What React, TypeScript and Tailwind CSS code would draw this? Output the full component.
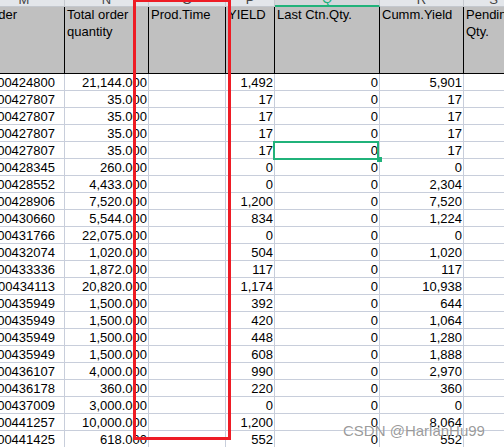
import React from 'react'

type Row = [string, string, string, string, string, string];

const rows: Row[] = [
    ['00424800', '21,144.000', '', '1,492', '0', '5,901'],
    ['00427807', '35.000', '', '17', '0', '17'],
    ['00427807', '35.000', '', '17', '0', '17'],
    ['00427807', '35.000', '', '17', '0', '17'],
    ['00427807', '35.000', '', '17', '0', '17'],
    ['00428345', '260.000', '', '0', '0', '0'],
    ['00428552', '4,433.000', '', '0', '0', '2,304'],
    ['00428906', '7,520.000', '', '1,200', '0', '7,520'],
    ['00430660', '5,544.000', '', '834', '0', '1,224'],
    ['00431766', '22,075.000', '', '0', '0', '0'],
    ['00432074', '1,020.000', '', '504', '0', '1,020'],
    ['00433336', '1,872.000', '', '117', '0', '117'],
    ['00434113', '20,820.000', '', '1,174', '0', '10,938'],
    ['00435949', '1,500.000', '', '392', '0', '644'],
    ['00435949', '1,500.000', '', '420', '0', '1,064'],
    ['00435949', '1,500.000', '', '448', '0', '1,280'],
    ['00435949', '1,500.000', '', '608', '0', '1,888'],
    ['00436107', '4,000.000', '', '990', '0', '2,970'],
    ['00436178', '360.000', '', '220', '0', '360'],
    ['00437009', '3,000.000', '', '0', '0', '0'],
    ['00441257', '10,000.000', '', '1,200', '0', '8,064'],
    ['00441425', '618.000', '', '552', '0', '552'],
];

const letters = ['M', 'N', 'O', 'P', 'Q', 'R', 'S'];
const headers = ['Sales order', 'Total order quantity', 'Prod.Time', 'YIELD', 'Last Ctn.Qty.', 'Cumm.Yield', 'Pending Qty.'];

const App = () => {
    return (
        <div className="relative w-[504px] h-[447px] overflow-hidden bg-white text-black text-[13px] font-['Liberation_Sans',Arial,sans-serif]">
            <div className="grid grid-cols-[65px_84px_77px_49px_105px_84px_60px] w-max">

                {/* column letters */}
                {letters.map((l, i) => (
                    <div
                        key={l}
                        className={
                            l === 'Q'
                                ? "h-[7px] border-r border-b-2 border-r-[#c4c8ce] border-b-[#20b27a] bg-[#d4d7db] text-[#20b27a] overflow-hidden flex items-end justify-center"
                                : i === 0
                                    ? "h-[7px] border-r border-b border-[#c4c8ce] bg-[#e3e6ea] text-[#444] overflow-hidden flex items-end justify-center pr-[16px]"
                                    : "h-[7px] border-r border-b border-[#c4c8ce] bg-[#e3e6ea] text-[#444] overflow-hidden flex items-end justify-center"
                        }>
                        <span className="leading-[14px] -mb-[1px]">{l}</span>
                    </div>
                ))}

                {/* header row */}
                {headers.map((h, i) => (
                    <div
                        key={h}
                        className={
                            i === 0
                                ? "h-[67px] bg-[#c0c0c0] border-r border-b border-black leading-[16.5px] overflow-hidden whitespace-nowrap flex justify-end pr-[47px]"
                                : "h-[67px] bg-[#c0c0c0] border-r border-b border-black leading-[16.5px] overflow-hidden pl-[2px]"
                        }>
                        <span>{h}</span>
                    </div>
                ))}

                {/* data rows */}
                {rows.map((r, ri) => (
                    <React.Fragment key={ri}>
                        <div className="h-[17px] border-r border-b border-[#c8cedb] pt-[1px] leading-[16px] overflow-hidden whitespace-nowrap flex justify-end pr-[9px]">
                            {'10' + r[0]}
                        </div>
                        {r.slice(1).map((c, ci) => (
                            <div key={ci} className="h-[17px] border-r border-b border-[#c8cedb] pt-[1px] pr-[1px] leading-[16px] text-right overflow-hidden whitespace-nowrap">
                                {c}
                            </div>
                        ))}
                        <div className="h-[17px] border-b border-[#c8cedb]" />
                    </React.Fragment>
                ))}
            </div>

            {/* selected cell */}
            <div className="absolute left-[273px] top-[141px] w-[106px] h-[19px] border-2 border-[#20b27a]" />
            <div className="absolute left-[377px] top-[157px] w-[5px] h-[5px] bg-[#20b27a]" />

            {/* red annotation box */}
            <div className="absolute left-[133px] top-[-1px] w-[98px] h-[441px] border-[3px] border-[#ee1c25]" />

            {/* watermark */}
            <div className="absolute left-[343px] top-[423px] text-[15px] leading-[15px] whitespace-nowrap text-[rgba(110,110,110,0.7)] [text-shadow:0_0_1px_white]">
                CSDN @HarlanHu99
            </div>
        </div>
    )
}

export default App
